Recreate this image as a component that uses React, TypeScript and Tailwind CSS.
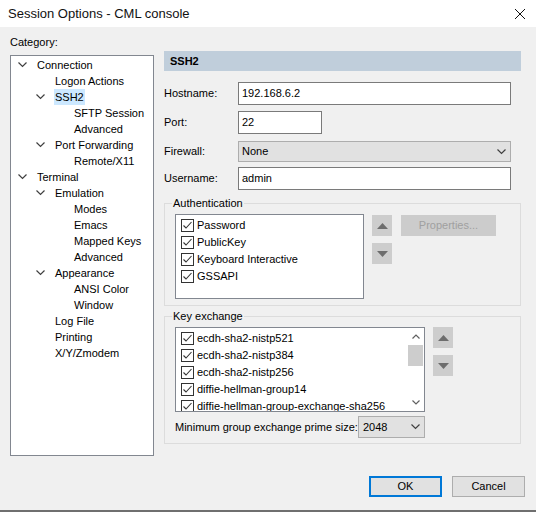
import * as React from 'react';

type Node = { label: string; depth: number; open?: boolean; selected?: boolean };

const TREE: Node[] = [
  { label: 'Connection', depth: 0, open: true },
  { label: 'Logon Actions', depth: 1 },
  { label: 'SSH2', depth: 1, open: true, selected: true },
  { label: 'SFTP Session', depth: 2 },
  { label: 'Advanced', depth: 2 },
  { label: 'Port Forwarding', depth: 1, open: true },
  { label: 'Remote/X11', depth: 2 },
  { label: 'Terminal', depth: 0, open: true },
  { label: 'Emulation', depth: 1, open: true },
  { label: 'Modes', depth: 2 },
  { label: 'Emacs', depth: 2 },
  { label: 'Mapped Keys', depth: 2 },
  { label: 'Advanced', depth: 2 },
  { label: 'Appearance', depth: 1, open: true },
  { label: 'ANSI Color', depth: 2 },
  { label: 'Window', depth: 2 },
  { label: 'Log File', depth: 1 },
  { label: 'Printing', depth: 1 },
  { label: 'X/Y/Zmodem', depth: 1 },
];

const AUTH = ['Password', 'PublicKey', 'Keyboard Interactive', 'GSSAPI'];
const KEX = [
  'ecdh-sha2-nistp521',
  'ecdh-sha2-nistp384',
  'ecdh-sha2-nistp256',
  'diffie-hellman-group14',
  'diffie-hellman-group-exchange-sha256',
];

const INDENT = ['pl-[7px]', 'pl-[25px]', 'pl-[44px]'];

function Chevron({ className = '' }: { className?: string }) {
  return (
    <svg width="9" height="6" viewBox="0 0 9 6" className={className}>
      <path d="M0.5 0.5 L4.5 4.5 L8.5 0.5" fill="none" stroke="#404040" strokeWidth="1.2" />
    </svg>
  );
}

function Check() {
  return (
    <span className="w-[13px] h-[13px] border border-[#333] bg-white flex items-center justify-center shrink-0">
      <svg width="11" height="11" viewBox="0 0 11 11">
        <path d="M1.5 5.5 L4 8 L9.5 2" fill="none" stroke="#333" strokeWidth="1.1" />
      </svg>
    </span>
  );
}

function Arrow({ up }: { up?: boolean }) {
  return (
    <button className="w-[20px] h-[21px] bg-[#cdcdcd] flex items-center justify-center">
      <svg width="11" height="6" viewBox="0 0 11 6">
        <path d={up ? 'M0 6 L5.5 0 L11 6 Z' : 'M0 0 L5.5 6 L11 0 Z'} fill="#6d6d6d" />
      </svg>
    </button>
  );
}

function Field({ label, children, className = '' }: { label: string; children: React.ReactNode; className?: string }) {
  return (
    <div className={`flex items-center ${className}`}>
      <span className="w-[74px] shrink-0">{label}</span>
      {children}
    </div>
  );
}

export default function App() {
  return (
    <div
      className="w-[536px] h-[512px] flex flex-col bg-[#f0f0f0] text-[11px] text-black"
      style={{ fontFamily: '"Liberation Sans", Arial, sans-serif' }}
    >
      {/* title bar */}
      <div className="h-[27px] bg-white flex items-center justify-between pl-[8px] pr-[10px] shrink-0">
        <span className="text-[13px] text-[#111]">Session Options - CML console</span>
        <svg width="12" height="12" viewBox="0 0 12 12">
          <path d="M1 1 L11 11 M11 1 L1 11" stroke="#111" strokeWidth="1" />
        </svg>
      </div>

      <div className="flex flex-1">
        {/* category tree */}
        <div className="w-[154px] pl-[10px] pt-[7px] shrink-0">
          <div className="h-[16px] leading-[16px]">Category:</div>
          <div className="mt-[5px] h-[401px] bg-white border border-[#828790] pt-[1px]">
            {TREE.map((n, i) => (
              <div key={i} className={`h-[16px] flex items-center ${INDENT[n.depth]}`}>
                <span className="w-[18px] flex justify-start shrink-0">
                  {n.open ? <Chevron /> : null}
                </span>
                <span
                  className={`leading-[16px] px-[1px] ${n.selected ? 'bg-[#cce8ff]' : ''}`}
                >
                  {n.label}
                </span>
              </div>
            ))}
          </div>
        </div>

        {/* right pane */}
        <div className="ml-[10px] w-[357px] pt-[24px] flex flex-col">
          <div className="h-[20px] bg-[#c0cedb] flex items-center pl-[6px] font-bold">SSH2</div>

          <Field label="Hostname:" className="mt-[11px]">
            <div className="w-[273px] h-[23px] bg-white border border-[#7a7a7a] flex items-center px-[3px]">192.168.6.2</div>
          </Field>
          <Field label="Port:" className="mt-[6px]">
            <div className="w-[84px] h-[23px] bg-white border border-[#7a7a7a] flex items-center px-[3px]">22</div>
          </Field>
          <Field label="Firewall:" className="mt-[7px]">
            <div className="w-[273px] h-[21px] bg-[#e1e1e1] border border-[#adadad] flex items-center justify-between px-[3px]">
              <span>None</span>
              <Chevron className="mr-[1px]" />
            </div>
          </Field>
          <Field label="Username:" className="mt-[5px]">
            <div className="w-[273px] h-[23px] bg-white border border-[#7a7a7a] flex items-center px-[3px]">admin</div>
          </Field>

          <fieldset className="mt-[5px] w-[357px] border border-[#dcdcdc] pl-[10px] pb-[6px]">
            <legend className="ml-[-3px] px-[1px] leading-[16px]">Authentication</legend>
            <div className="flex items-start mt-[3px]">
              <div className="w-[189px] h-[85px] bg-white border border-[#828790] pl-[5px] pt-[2px]">
                {AUTH.map((a) => (
                  <div key={a} className="h-[17px] flex items-center gap-[3px]">
                    <Check />
                    <span>{a}</span>
                  </div>
                ))}
              </div>
              <div className="ml-[8px] mt-[1px] flex flex-col gap-[7px]">
                <Arrow up />
                <Arrow />
              </div>
              <button className="ml-[9px] mt-[1px] w-[95px] h-[21px] bg-[#cccccc] text-[#a0a0a0]">Properties...</button>
            </div>
          </fieldset>

          <fieldset className="mt-[2px] w-[357px] border border-[#dcdcdc] pl-[10px] pb-[5px]">
            <legend className="ml-[-3px] px-[1px] leading-[16px]">Key exchange</legend>
            <div className="flex items-start mt-[3px]">
              <div className="w-[250px] h-[85px] bg-white border border-[#828790] flex">
                <div className="flex-1 pl-[5px] pt-[2px] overflow-hidden">
                  {KEX.map((k) => (
                    <div key={k} className="h-[17px] flex items-center gap-[3px] whitespace-nowrap">
                      <Check />
                      <span>{k}</span>
                    </div>
                  ))}
                </div>
                <div className="w-[17px] flex flex-col items-center">
                  <div className="h-[17px] flex items-center justify-center">
                    <svg width="8" height="5" viewBox="0 0 8 5">
                      <path d="M0.5 4.5 L4 1 L7.5 4.5" fill="none" stroke="#606060" strokeWidth="1.2" />
                    </svg>
                  </div>
                  <div className="w-[15px] h-[21px] bg-[#cdcdcd]" />
                  <div className="flex-1" />
                  <div className="h-[17px] flex items-center justify-center">
                    <svg width="8" height="5" viewBox="0 0 8 5">
                      <path d="M0.5 0.5 L4 4 L7.5 0.5" fill="none" stroke="#606060" strokeWidth="1.2" />
                    </svg>
                  </div>
                </div>
              </div>
              <div className="ml-[8px] flex flex-col gap-[7px]">
                <Arrow up />
                <Arrow />
              </div>
            </div>
            <div className="flex items-center mt-[4px]">
              <span className="w-[183px]">Minimum group exchange prime size:</span>
              <div className="w-[67px] h-[22px] bg-[#e1e1e1] border border-[#adadad] flex items-center justify-between px-[4px]">
                <span>2048</span>
                <Chevron />
              </div>
            </div>
          </fieldset>
        </div>
      </div>

      {/* dialog buttons */}
      <div className="flex justify-end gap-[10px] pr-[11px] pb-[13px] pt-0 border-b-2 border-[#6f6f6f]">
        <button className="w-[73px] h-[21px] bg-[#e1e1e1] border-2 border-[#0078d7]">OK</button>
        <button className="w-[73px] h-[21px] bg-[#e1e1e1] border border-[#adadad]">Cancel</button>
      </div>
    </div>
  );
}
